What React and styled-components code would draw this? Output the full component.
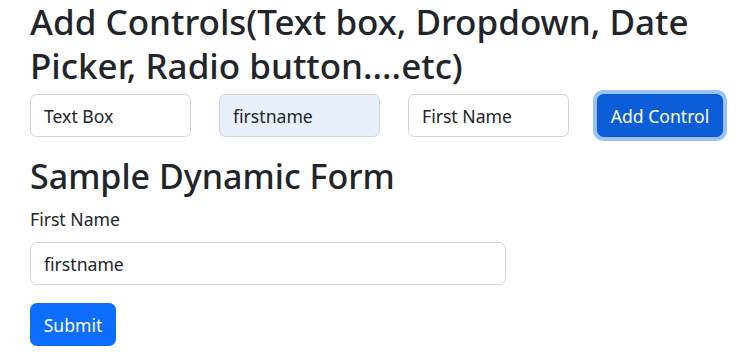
import React from "react";
import styled, { createGlobalStyle } from "styled-components";

const GlobalStyle = createGlobalStyle`
  * {
    box-sizing: border-box;
  }
  body {
    margin: 0;
    background: #fff;
    color: #212529;
    font-family: "Noto Sans", "Open Sans", sans-serif;
    font-size: 17.6px;
  }
`;

const Page = styled.div`
  padding: 0 30px;
`;

const Title = styled.h1`
  margin: 0 0 6px;
  max-width: 700px;
  font-size: 35px;
  font-weight: 500;
  line-height: 44px;
`;

const Toolbar = styled.div`
  display: flex;
  align-items: center;
  gap: 28px;
`;

const Input = styled.input`
  display: block;
  width: ${(p) => p.$width || "161px"};
  height: 43px;
  padding: 0 13px;
  border: 1px solid #ced4da;
  border-radius: 6.6px;
  background: ${(p) => (p.$filled ? "#e8f0fe" : "#fff")};
  color: #212529;
  font-family: inherit;
  font-size: 17.6px;
  outline: none;
`;

const Button = styled.button`
  flex: none;
  width: ${(p) => p.$width};
  height: 43px;
  padding: 0;
  border: 1px solid ${(p) => (p.$focused ? "#0a58ca" : "#0d6efd")};
  border-radius: 6.6px;
  background: ${(p) => (p.$focused ? "#0b5ed7" : "#0d6efd")};
  color: #fff;
  font-family: inherit;
  font-size: 17.6px;
  white-space: nowrap;
  box-shadow: ${(p) => (p.$focused ? "0 0 0 4px rgba(49, 132, 253, 0.5)" : "none")};
  cursor: pointer;
`;

const SubTitle = styled.h2`
  margin: 19px 0 9px;
  font-size: 34px;
  font-weight: 500;
  line-height: 41px;
`;

const Field = styled.div`
  margin-bottom: 18px;
`;

const Label = styled.label`
  display: block;
  margin: 2px 0 10px;
  line-height: 26.4px;
`;

export default function App() {
  return (
    <Page>
      <GlobalStyle />
      <Title>Add Controls(Text box, Dropdown, Date Picker, Radio button....etc)</Title>
      <Toolbar>
        <Input defaultValue="Text Box" />
        <Input defaultValue="firstname" $filled />
        <Input defaultValue="First Name" />
        <Button $focused $width="126px">Add Control</Button>
      </Toolbar>
      <SubTitle>Sample Dynamic Form</SubTitle>
      <Field>
        <Label>First Name</Label>
        <Input defaultValue="firstname" $width="476px" />
      </Field>
      <Button $width="86px">Submit</Button>
    </Page>
  );
}
